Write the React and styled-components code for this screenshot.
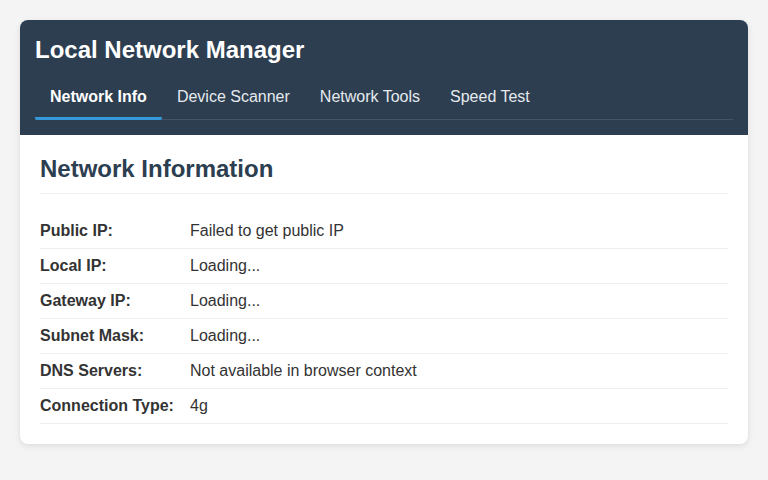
import React from "react";
import styled, { createGlobalStyle } from "styled-components";

const GlobalStyle = createGlobalStyle`
    body {
        margin: 0;
        background: #f4f4f4;
        font-family: "Liberation Sans", Arial, sans-serif;
        color: #333;
    }
`;

const Page = styled.div`
    padding: 20px;
`;

const Card = styled.div`
    background: white;
    border-radius: 8px;
    box-shadow: 0 2px 6px rgba(0, 0, 0, 0.1);
    overflow: hidden;
`;

const Header = styled.header`
    background: #2c3e50;
    color: white;
    padding: 15px;
`;

const Title = styled.h1`
    margin: 0 0 13px;
    font-size: 24px;
    line-height: 30px;
    font-weight: 700;
`;

const TabList = styled.nav`
    display: flex;
    border-bottom: 1px solid rgba(255, 255, 255, 0.12);
`;

const Tab = styled.button`
    background: none;
    border: none;
    border-bottom: 3px solid ${props => (props.active ? "#3498db" : "transparent")};
    border-radius: 2px;
    margin-bottom: -1px;
    padding: 10px 15px 11px;
    font-family: inherit;
    font-size: 16px;
    line-height: 18px;
    font-weight: ${props => (props.active ? 700 : 400)};
    color: ${props => (props.active ? "#fff" : "#e6eaee")};
    cursor: pointer;
`;

const Content = styled.main`
    padding: 20px;
`;

const SectionTitle = styled.h2`
    margin: 0 0 20px;
    padding-bottom: 10px;
    border-bottom: 1px solid #eee;
    font-size: 24px;
    line-height: 28px;
    color: #2c3e50;
`;

const Row = styled.div`
    display: flex;
    padding: 8px 0;
    border-bottom: 1px solid #eee;
    font-size: 16px;
    line-height: 18px;
`;

const Label = styled.span`
    width: 150px;
    font-weight: 700;
    color: #333;
`;

const Value = styled.span`
    color: #333;
`;

const tabs = ["Network Info", "Device Scanner", "Network Tools", "Speed Test"];

const info = [
    ["Public IP:", "Failed to get public IP"],
    ["Local IP:", "Loading..."],
    ["Gateway IP:", "Loading..."],
    ["Subnet Mask:", "Loading..."],
    ["DNS Servers:", "Not available in browser context"],
    ["Connection Type:", "4g"],
];

const App = () => {
    return (
        <Page>
            <GlobalStyle />
            <Card>
                <Header>
                    <Title>Local Network Manager</Title>
                    <TabList>
                        {tabs.map((t, i) => (
                            <Tab key={t} active={i === 0}>{t}</Tab>
                        ))}
                    </TabList>
                </Header>
                <Content>
                    <SectionTitle>Network Information</SectionTitle>
                    {info.map(([label, value]) => (
                        <Row key={label}>
                            <Label>{label}</Label>
                            <Value>{value}</Value>
                        </Row>
                    ))}
                </Content>
            </Card>
        </Page>
    );
};

export default App;
